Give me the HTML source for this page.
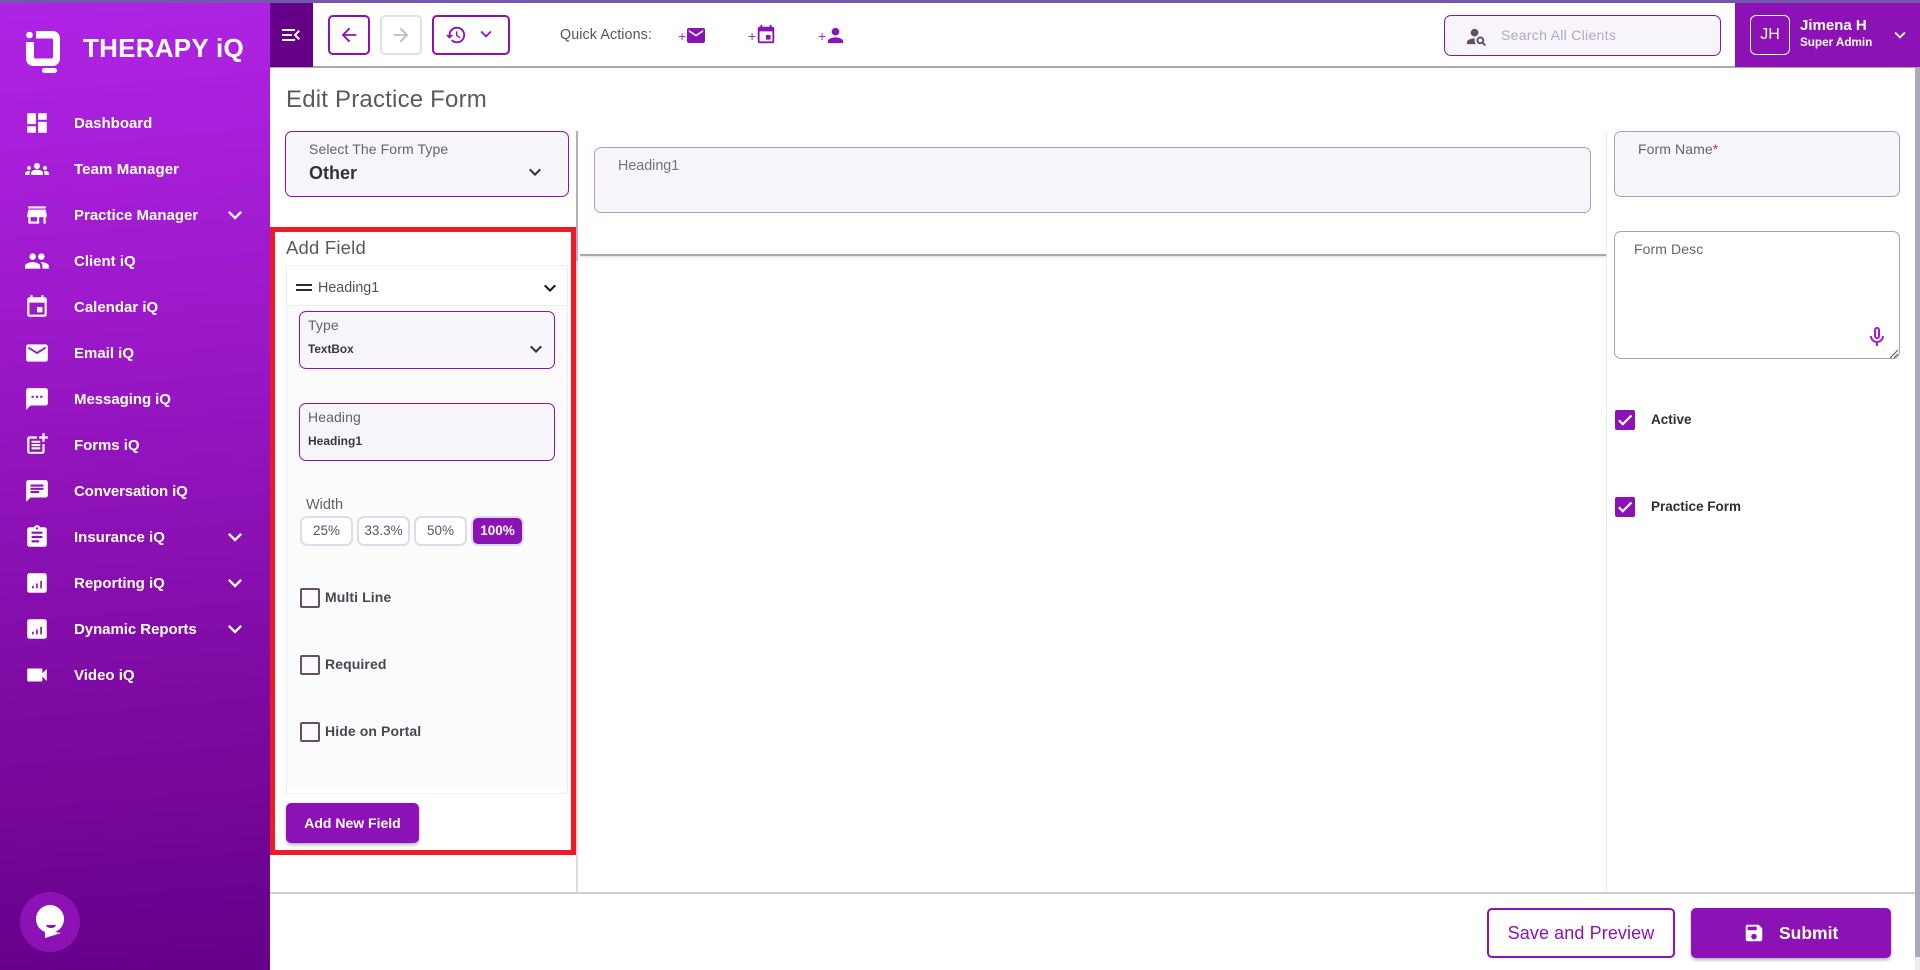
<!DOCTYPE html>
<html lang="en">
<head>
<meta charset="utf-8">
<title>Edit Practice Form</title>
<style>
html,body{margin:0;padding:0;width:1920px;height:970px;overflow:hidden;background:#fff;font-family:"Liberation Sans",Arial,sans-serif;}
.a{position:absolute;box-sizing:border-box;}
.t{position:absolute;white-space:nowrap;line-height:20px;height:20px;}
svg.i{position:absolute;display:block;}
.nav{color:#fff;font-size:15px;font-weight:700;left:74px;}
.lbl{color:#66626c;font-size:14px;letter-spacing:.1px;}
.fld{background:#f7f5fa;border-radius:7px;}
.pb{border:1px solid #8c12b5;}
.gb{border:1px solid #ab9fba;border-radius:7px;}
.w{position:absolute;box-sizing:border-box;top:516px;height:30px;border:2px solid #dcdcec;border-radius:7px;background:#fff;color:#5a5660;font-size:13.5px;text-align:center;line-height:26px;}
.cb{position:absolute;box-sizing:border-box;left:300px;width:20px;height:20px;border:2px solid #635068;border-radius:2px;}
.cl{color:#4a4650;font-size:14px;font-weight:700;left:325px;letter-spacing:.1px;}
.ck{position:absolute;box-sizing:border-box;left:1615px;width:20px;height:20px;background:#8c12b5;border-radius:2px;}
.cr{color:#2f2c33;font-size:13.5px;font-weight:700;left:1651px;}
</style>
</head>
<body>
<svg width="0" height="0" style="position:absolute">
<defs>
<symbol id="dash" viewBox="0 0 24 24"><path d="M3 13h8V3H3v10zm0 8h8v-6H3v6zm10 0h8V11h-8v10zm0-18v6h8V3h-8z"/></symbol>
<symbol id="groups" viewBox="0 0 24 24"><path d="M12 12.75c1.63 0 3.07.39 4.24.9 1.08.48 1.76 1.56 1.76 2.73V18H6v-1.61c0-1.18.68-2.26 1.76-2.73 1.17-.52 2.61-.91 4.24-.91zM4 13c1.1 0 2-.9 2-2s-.9-2-2-2-2 .9-2 2 .9 2 2 2zm1.13 1.1C4.76 14.04 4.39 14 4 14c-.99 0-1.93.21-2.78.58C.48 14.9 0 15.62 0 16.43V18h4.5v-1.61c0-.83.23-1.61.63-2.29zM20 13c1.1 0 2-.9 2-2s-.9-2-2-2-2 .9-2 2 .9 2 2 2zm4 3.43c0-.81-.48-1.53-1.22-1.85-.85-.37-1.79-.58-2.78-.58-.39 0-.76.04-1.13.1.4.68.63 1.46.63 2.29V18H24v-1.57zM12 6c1.66 0 3 1.34 3 3s-1.34 3-3 3-3-1.34-3-3 1.34-3 3-3z"/></symbol>
<symbol id="store" viewBox="0 0 24 24"><path d="M20 4H4v2h16V4zm1 10v-2l-1-5H4l-1 5v2h1v6h10v-6h4v6h2v-6h1zm-9 4H6v-4h6v4z"/></symbol>
<symbol id="people" viewBox="0 0 24 24"><path d="M16 11c1.66 0 2.99-1.34 2.99-3S17.66 5 16 5c-1.66 0-3 1.34-3 3s1.34 3 3 3zm-8 0c1.66 0 2.99-1.34 2.99-3S9.66 5 8 5C6.34 5 5 6.34 5 8s1.34 3 3 3zm0 2c-2.33 0-7 1.17-7 3.5V19h14v-2.5c0-2.33-4.67-3.5-7-3.5zm8 0c-.29 0-.62.02-.97.05 1.16.84 1.97 1.97 1.97 3.45V19h6v-2.5c0-2.33-4.67-3.5-7-3.5z"/></symbol>
<symbol id="event" viewBox="0 0 24 24"><path d="M17 12h-5v5h5v-5zM16 1v2H8V1H6v2H5c-1.11 0-1.99.9-1.99 2L3 19c0 1.1.89 2 2 2h14c1.1 0 2-.9 2-2V5c0-1.1-.9-2-2-2h-1V1h-2zm3 18H5V8h14v11z"/></symbol>
<symbol id="email" viewBox="0 0 24 24"><path d="M20 4H4c-1.1 0-1.99.9-1.99 2L2 18c0 1.1.9 2 2 2h16c1.1 0 2-.9 2-2V6c0-1.1-.9-2-2-2zm0 4l-8 5-8-5V6l8 5 8-5v2z"/></symbol>
<symbol id="sms" viewBox="0 0 24 24"><path d="M20 2H4c-1.1 0-1.99.9-1.99 2L2 22l4-4h14c1.1 0 2-.9 2-2V4c0-1.1-.9-2-2-2zM9 11H7V9h2v2zm4 0h-2V9h2v2zm4 0h-2V9h2v2z"/></symbol>
<symbol id="post" viewBox="0 0 24 24"><path d="M17 19.22H5V7h7V5H5c-1.1 0-2 .9-2 2v12c0 1.1.9 2 2 2h12c1.1 0 2-.9 2-2v-7h-2v7.22zM19 2h-2v3h-3c.01.01 0 2 0 2h3v2.99c.01.01 2 0 2 0V7h3V5h-3V2zM7 9h8v2H7zM7 12v2h8v-2h-3zM7 15h8v2H7z"/></symbol>
<symbol id="chat" viewBox="0 0 24 24"><path d="M20 2H4c-1.1 0-1.99.9-1.99 2L2 22l4-4h14c1.1 0 2-.9 2-2V4c0-1.1-.9-2-2-2zM6 9h12v2H6V9zm8 5H6v-2h8v2zm4-6H6V6h12v2z"/></symbol>
<symbol id="assign" viewBox="0 0 24 24"><path d="M19 3h-4.18C14.4 1.84 13.3 1 12 1c-1.3 0-2.4.84-2.82 2H5c-1.1 0-2 .9-2 2v14c0 1.1.9 2 2 2h14c1.1 0 2-.9 2-2V5c0-1.1-.9-2-2-2zm-7 0c.55 0 1 .45 1 1s-.45 1-1 1-1-.45-1-1 .45-1 1-1zm2 14H7v-2h7v2zm3-4H7v-2h10v2zm0-4H7V7h10v2z"/></symbol>
<symbol id="assess" viewBox="0 0 24 24"><path fill-rule="evenodd" d="M19 3H5c-1.1 0-2 .9-2 2v14c0 1.1.9 2 2 2h14c1.1 0 2-.9 2-2V5c0-1.1-.9-2-2-2zM9 17H7.500v-2.500H9V17zm3.700 0h-1.500v-4.500h1.500V17zm3.800 0H15V10h1.500v7z"/></symbol>
<symbol id="video" viewBox="0 0 24 24"><path d="M17 10.5V7c0-.55-.45-1-1-1H4c-.55 0-1 .45-1 1v10c0 .55.45 1 1 1h12c.55 0 1-.45 1-1v-3.5l4 4v-11l-4 4z"/></symbol>
<symbol id="more" viewBox="0 0 24 24"><path d="M16.59 8.59L12 13.17 7.41 8.59 6 10l6 6 6-6z"/></symbol>
<symbol id="check" viewBox="0 0 24 24"><path d="M9 16.17L4.83 12l-1.42 1.41L9 19 21 7l-1.41-1.41z"/></symbol>
</defs>
</svg>

<!-- top strip -->
<div class="a" style="left:0;top:0;width:1920px;height:3px;background:#7257ad"></div>

<!-- sidebar -->
<div class="a" style="left:0;top:3px;width:270px;height:967px;background:linear-gradient(175deg,#af24e5 0%,#9b18c8 35%,#7d0aa2 72%,#650088 100%)"></div>
<svg class="i" style="left:25px;top:30px" width="37" height="44" viewBox="0 0 37 44" fill="#fff"><circle cx="4.500" cy="5" r="3.300"/><path fill-rule="evenodd" d="M11 1h16c5 0 8 3 8 8v19c0 5-3 8-8 8H9c-5 0-8-3-8-8V12h8v15c0 1 .5 1.500 1.500 1.500h16c1 0 1.500-.5 1.500-1.500V10c0-1-.5-1.500-1.500-1.500H11z"/><rect x="17" y="38" width="15" height="5" rx="2.500"/></svg>
<div class="t" style="left:83px;top:38px;color:#fff;font-size:26px;font-weight:700;letter-spacing:.25px;">THERAPY iQ</div>

<svg class="i" style="left:24px;top:110px" width="26" height="26" fill="#fff"><use href="#dash"/></svg>
<div class="t nav" style="top:114px">Dashboard</div>
<svg class="i" style="left:25px;top:157px" width="24" height="24" fill="#fff"><use href="#groups"/></svg>
<div class="t nav" style="top:160px;letter-spacing:.1px">Team Manager</div>
<svg class="i" style="left:24px;top:202px" width="26" height="26" fill="#fff"><use href="#store"/></svg>
<div class="t nav" style="top:206px">Practice Manager</div>
<svg class="i" style="left:24px;top:248px" width="26" height="26" fill="#fff"><use href="#people"/></svg>
<div class="t nav" style="top:252px">Client iQ</div>
<svg class="i" style="left:24px;top:294px" width="26" height="26" fill="#fff"><use href="#event"/></svg>
<div class="t nav" style="top:298px">Calendar iQ</div>
<svg class="i" style="left:24px;top:340px" width="26" height="26" fill="#fff"><use href="#email"/></svg>
<div class="t nav" style="top:344px">Email iQ</div>
<svg class="i" style="left:24px;top:386px" width="26" height="26" fill="#fff"><use href="#sms"/></svg>
<div class="t nav" style="top:390px;letter-spacing:-.05px">Messaging iQ</div>
<svg class="i" style="left:24px;top:431px" width="26" height="26" fill="#fff"><use href="#post"/></svg>
<div class="t nav" style="top:436px;letter-spacing:-.05px">Forms iQ</div>
<svg class="i" style="left:24px;top:478px" width="26" height="26" fill="#fff"><use href="#chat"/></svg>
<div class="t nav" style="top:482px;letter-spacing:-.15px">Conversation iQ</div>
<svg class="i" style="left:24px;top:524px" width="26" height="26" fill="#fff"><use href="#assign"/></svg>
<div class="t nav" style="top:528px">Insurance iQ</div>
<svg class="i" style="left:24px;top:570px" width="26" height="26" fill="#fff"><use href="#assess"/></svg>
<div class="t nav" style="top:574px">Reporting iQ</div>
<svg class="i" style="left:24px;top:616px" width="26" height="26" fill="#fff"><use href="#assess"/></svg>
<div class="t nav" style="top:620px;letter-spacing:-.05px">Dynamic Reports</div>
<svg class="i" style="left:24px;top:662px" width="26" height="26" fill="#fff"><use href="#video"/></svg>
<div class="t nav" style="top:666px">Video iQ</div>

<svg class="i" style="left:221px;top:201px" width="28" height="28" fill="#fff"><use href="#more"/></svg>
<svg class="i" style="left:221px;top:523px" width="28" height="28" fill="#fff"><use href="#more"/></svg>
<svg class="i" style="left:221px;top:569px" width="28" height="28" fill="#fff"><use href="#more"/></svg>
<svg class="i" style="left:221px;top:615px" width="28" height="28" fill="#fff"><use href="#more"/></svg>

<!-- chat bubble -->
<div class="a" style="left:20px;top:892px;width:60px;height:60px;border-radius:50%;background:#8c12b5"></div>
<svg class="i" style="left:34px;top:905px" width="32" height="34" viewBox="0 0 32 34"><circle cx="16" cy="14" r="14" fill="#fff"/><path d="M11 25l0 8 16-5z" fill="#fff"/><path d="M12 20h10c-1 4-9 4-10 0z" fill="#8c12b5"/></svg>

<!-- header -->
<div class="a" style="left:270px;top:66px;width:1650px;height:2px;background:#a9a9ad"></div>
<div class="a" style="left:270px;top:3px;width:43px;height:64px;background:#660088"></div>
<svg class="i" style="left:279px;top:23px" width="24" height="24" fill="#fff" viewBox="0 0 24 24"><path d="M3 18h13v-2H3v2zm0-5h10v-2H3v2zm0-7v2h13V6H3zm18 9.590L17.420 12 21 8.410 19.590 7l-5 5 5 5L21 15.590z"/></svg>

<div class="a" style="left:328px;top:15px;width:42px;height:40px;border:2px solid #8c12b5;border-radius:5px"></div>
<svg class="i" style="left:338px;top:24px" width="22" height="22" fill="#8c12b5" viewBox="0 0 24 24"><path d="M20 11H7.830l5.590-5.590L12 4l-8 8 8 8 1.410-1.410L7.830 13H20v-2z"/></svg>
<div class="a" style="left:380px;top:15px;width:42px;height:40px;border:2px solid #e0e0e0;border-radius:5px"></div>
<svg class="i" style="left:390px;top:24px" width="22" height="22" fill="#bdbdbd" viewBox="0 0 24 24"><path d="M12 4l-1.410 1.410L16.170 11H4v2h12.170l-5.580 5.590L12 20l8-8z"/></svg>
<div class="a" style="left:432px;top:15px;width:78px;height:40px;border:2px solid #8c12b5;border-radius:5px"></div>
<svg class="i" style="left:445px;top:24px" width="22" height="22" fill="#8c12b5" viewBox="0 0 24 24"><path d="M13 3c-4.970 0-9 4.030-9 9H1l3.890 3.890.07.14L9 12H6c0-3.870 3.130-7 7-7s7 3.130 7 7-3.130 7-7 7c-1.930 0-3.680-.79-4.940-2.060l-1.420 1.420C8.270 19.990 10.510 21 13 21c4.970 0 9-4.030 9-9s-4.030-9-9-9zm-1 5v5l4.280 2.540.72-1.210-3.500-2.080V8H12z"/></svg>
<svg class="i" style="left:475px;top:23px" width="22" height="22" fill="#8c12b5"><use href="#more"/></svg>

<div class="t" style="left:560px;top:25px;color:#57535c;font-size:14.300px;letter-spacing:.1px;">Quick Actions:</div>
<div class="t" style="left:678px;top:26px;color:#a030c8;font-size:14px;">+</div>
<svg class="i" style="left:687px;top:28px" width="18" height="15" fill="#8c12b5" viewBox="2 4 20 16" preserveAspectRatio="none"><path d="M20 4H4c-1.100 0-1.990.9-1.990 2L2 18c0 1.100.9 2 2 2h16c1.100 0 2-.9 2-2V6c0-1.100-.9-2-2-2zm0 4l-8 5-8-5V6l8 5 8-5v2z"/></svg>
<div class="t" style="left:748px;top:26px;color:#a030c8;font-size:14px;">+</div>
<svg class="i" style="left:755px;top:24px" width="22" height="22" fill="#8c12b5"><use href="#event"/></svg>
<div class="t" style="left:818px;top:26px;color:#a030c8;font-size:14px;">+</div>
<svg class="i" style="left:824px;top:24px" width="23" height="23" fill="#8c12b5" viewBox="0 0 24 24"><path d="M12 12c2.210 0 4-1.790 4-4s-1.790-4-4-4-4 1.790-4 4 1.790 4 4 4zm0 2c-2.670 0-8 1.340-8 4v2h16v-2c0-2.660-5.330-4-8-4z"/></svg>

<!-- search -->
<div class="a fld pb" style="left:1444px;top:15px;width:277px;height:41px"></div>
<svg class="i" style="left:1465px;top:25px" width="23" height="23" fill="#5c4f66" viewBox="0 0 24 24"><path d="M10 12c2.200 0 4-1.800 4-4s-1.800-4-4-4-4 1.800-4 4 1.800 4 4 4zM10.350 14.010C7.620 13.910 2 15.270 2 18v2h9.540c-2.470-2.760-1.230-5.890-1.190-5.990zM19.430 18.020c.36-.59.57-1.280.57-2.020 0-2.210-1.790-4-4-4s-4 1.790-4 4 1.790 4 4 4c.74 0 1.430-.22 2.020-.57L20.590 22 22 20.590l-2.570-2.570zM16 18c-1.100 0-2-.9-2-2s.9-2 2-2 2 .9 2 2-.9 2-2 2z"/></svg>
<div class="t" style="left:1501px;top:25px;color:#b2abba;font-size:14px;letter-spacing:.3px;">Search All Clients</div>

<!-- user -->
<div class="a" style="left:1735px;top:3px;width:185px;height:64px;background:#8c12b5"></div>
<div class="a" style="left:1750px;top:15px;width:40px;height:40px;border:1px solid #fff;border-radius:6px;color:#fff;font-size:16px;text-align:center;line-height:38px">JH</div>
<div class="t" style="left:1800px;top:16px;color:#fff;font-size:15px;font-weight:700;">Jimena H</div>
<div class="t" style="left:1800px;top:33px;color:#fff;font-size:11.700px;font-weight:700;">Super Admin</div>
<svg class="i" style="left:1889px;top:24px" width="22" height="22" fill="#fff"><use href="#more"/></svg>

<!-- scrollbar -->
<div class="a" style="left:1915px;top:68px;width:5px;height:889px;background:#a9a9bb"></div>
<div class="a" style="left:1915px;top:957px;width:5px;height:13px;background:#ececf0"></div>

<!-- title -->
<div class="t" style="left:286px;top:90px;color:#5c5862;font-size:24px;letter-spacing:.2px;">Edit Practice Form</div>

<!-- form type -->
<div class="a fld pb" style="left:285px;top:131px;width:284px;height:66px"></div>
<div class="t lbl" style="left:309px;top:139px;">Select The Form Type</div>
<div class="t" style="left:309px;top:163px;color:#35313a;font-size:18px;font-weight:700;">Other</div>
<svg class="i" style="left:523px;top:160px" width="24" height="24" fill="#35313a"><use href="#more"/></svg>

<!-- separators -->
<div class="a" style="left:576px;top:131px;width:2px;height:130px;background:#b0b0c4"></div>
<div class="a" style="left:576px;top:261px;width:2px;height:632px;background:#ddd"></div>
<div class="a" style="left:1606px;top:131px;width:1px;height:762px;background:#eaeaea"></div>

<!-- red box -->
<div class="a" style="left:270px;top:227px;width:306px;height:628px;border:5px solid #ee1b27"></div>
<div class="t" style="left:286px;top:238px;color:#5c5862;font-size:18.500px;letter-spacing:.2px;">Add Field</div>

<!-- card -->
<div class="a" style="left:286px;top:265px;width:282px;height:529px;border:1px solid #eee;background:#fff"></div>
<div class="a" style="left:287px;top:306px;width:280px;height:483px;background:#fbfbfc"></div>
<div class="a" style="left:287px;top:305px;width:280px;height:1px;background:#eee"></div>
<div class="a" style="left:296px;top:284px;width:16px;height:2px;background:#2f2b35"></div>
<div class="a" style="left:296px;top:289px;width:16px;height:2px;background:#2f2b35"></div>
<div class="t" style="left:318px;top:278px;color:#4e5268;font-size:14.300px;">Heading1</div>
<svg class="i" style="left:538px;top:276px" width="24" height="24" fill="#14182a"><use href="#more"/></svg>

<div class="a fld pb" style="left:299px;top:311px;width:256px;height:58px"></div>
<div class="t lbl" style="left:308px;top:315px;">Type</div>
<div class="t" style="left:308px;top:339px;color:#3a3640;font-size:11.800px;font-weight:700;">TextBox</div>
<svg class="i" style="left:524px;top:337px" width="24" height="24" fill="#35313a"><use href="#more"/></svg>

<div class="a fld pb" style="left:299px;top:403px;width:256px;height:58px"></div>
<div class="t lbl" style="left:308px;top:407px;">Heading</div>
<div class="t" style="left:308px;top:431px;color:#3a3640;font-size:12px;font-weight:700;">Heading1</div>

<div class="t" style="left:306px;top:495px;color:#66626c;font-size:14.500px;">Width</div>
<div class="w" style="left:300px;width:53px;">25%</div>
<div class="w" style="left:357px;width:53px;">33.3%</div>
<div class="w" style="left:414px;width:53px;">50%</div>
<div class="w" style="left:471px;width:53px;background:#8c12b5;color:#fff;font-weight:700;">100%</div>

<div class="cb" style="top:588px"></div>
<div class="t cl" style="top:587px">Multi Line</div>
<div class="cb" style="top:655px"></div>
<div class="t cl" style="top:654px">Required</div>
<div class="cb" style="top:722px"></div>
<div class="t cl" style="top:721px">Hide on Portal</div>

<div class="a" style="left:286px;top:803px;width:133px;height:40px;background:#8c12b5;border-radius:5px;box-shadow:0 2px 3px rgba(0,0,0,.3);color:#fff;font-size:14px;font-weight:700;text-align:center;line-height:40px">Add New Field</div>

<!-- center -->
<div class="a fld gb" style="left:594px;top:147px;width:997px;height:66px"></div>
<div class="t" style="left:618px;top:156px;color:#77737d;font-size:14.300px;">Heading1</div>
<div class="a" style="left:580px;top:254px;width:1026px;height:2px;background:#aaa;box-shadow:0 1px 2px rgba(0,0,0,.15)"></div>

<!-- right -->
<div class="a fld gb" style="left:1614px;top:131px;width:286px;height:66px"></div>
<div class="t lbl" style="left:1638px;top:139px;">Form Name<span style="color:#d0314a">*</span></div>
<div class="a gb" style="left:1614px;top:231px;width:286px;height:128px;background:#fff"></div>
<div class="t lbl" style="left:1634px;top:239px;">Form Desc</div>
<svg class="i" style="left:1865px;top:325px" width="24" height="24" fill="#a020d0" viewBox="0 0 24 24"><path fill-rule="evenodd" d="M12 14c1.660 0 3-1.340 3-3V5c0-1.660-1.340-3-3-3S9 3.340 9 5v6c0 1.660 1.340 3 3 3zm-1-9c0-.55.45-1 1-1s1 .45 1 1v6c0 .55-.45 1-1 1s-1-.45-1-1V5zm6 6c0 2.760-2.240 5-5 5s-5-2.240-5-5H5c0 3.530 2.610 6.430 6 6.920V21h2v-3.080c3.390-.49 6-3.390 6-6.920h-2z"/></svg>
<svg class="i" style="left:1889px;top:349px" width="10" height="10" stroke="#555" stroke-width="1" fill="none"><path d="M1 9L9 1M5 9L9 5"/></svg>

<div class="ck" style="top:410px"></div>
<svg class="i" style="left:1616px;top:411px" width="18" height="18" fill="#fff" stroke="#fff" stroke-width=".9"><use href="#check"/></svg>
<div class="t cr" style="top:410px">Active</div>
<div class="ck" style="top:497px"></div>
<svg class="i" style="left:1616px;top:498px" width="18" height="18" fill="#fff" stroke="#fff" stroke-width=".9"><use href="#check"/></svg>
<div class="t cr" style="top:497px">Practice Form</div>

<!-- footer -->
<div class="a" style="left:270px;top:892px;width:1645px;height:2px;background:#cfcfcf"></div>
<div class="a" style="left:1487px;top:908px;width:188px;height:50px;border:2px solid #8c12b5;border-radius:5px;background:#fff;color:#8c12b5;font-size:18px;letter-spacing:.1px;text-align:center;line-height:46px">Save and Preview</div>
<div class="a" style="left:1691px;top:908px;width:200px;height:50px;background:#8c12b5;border-radius:5px;box-shadow:0 2px 3px rgba(0,0,0,.3)"></div>
<svg class="i" style="left:1743px;top:922px" width="22" height="22" fill="#fff" viewBox="0 0 24 24"><path d="M17 3H5c-1.110 0-2 .9-2 2v14c0 1.100.89 2 2 2h14c1.100 0 2-.9 2-2V7l-4-4zm-5 16c-1.660 0-3-1.340-3-3s1.340-3 3-3 3 1.340 3 3-1.340 3-3 3zm3-10H5V5h10v4z"/></svg>
<div class="t" style="left:1779px;top:923px;color:#fff;font-size:17.500px;font-weight:700;">Submit</div>
</body>
</html>
